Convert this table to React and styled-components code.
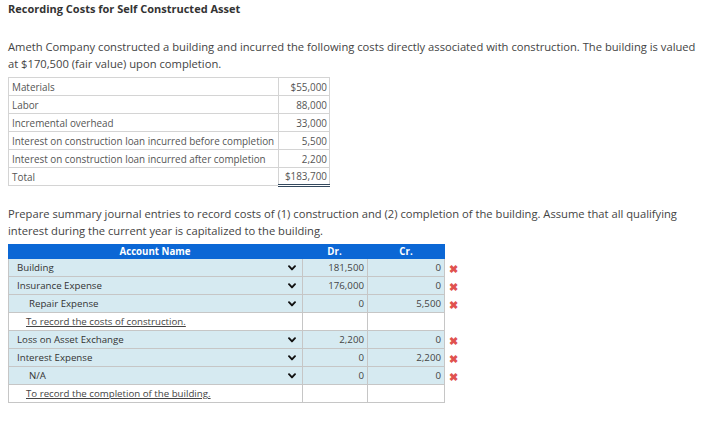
import React from 'react';
import styled, { createGlobalStyle } from 'styled-components';

const GlobalStyle = createGlobalStyle`
  body {
    margin: 0;
    background: #ffffff;
    font-family: "Open Sans", "Liberation Sans", sans-serif;
    color: #333333;
  }
`;

const Page = styled.div`
  padding: 0 8px;
  width: 714px;
  box-sizing: border-box;
`;

const Title = styled.div`
  font-weight: 700;
  font-size: 11px;
  line-height: 18px;
  color: #333333;
`;

const Paragraph = styled.p`
  margin: ${(p) => p.$top}px 0 ${(p) => p.$bottom}px 0;
  font-size: 11.2px;
  line-height: 17px;
  color: #444444;
`;

const CostTable = styled.table`
  border-collapse: collapse;
  font-size: 9.9px;
  color: #555555;
`;

const CostRow = styled.tr`
  height: 18px;
`;

const CostLabel = styled.td`
  border: 1px solid #d4d4d4;
  padding: 0 3px;
  width: 263px;
  white-space: nowrap;
`;

const CostValue = styled.td`
  border: 1px solid #d4d4d4;
  border-top: ${(p) => (p.$total ? '1px solid #222' : '1px solid #d4d4d4')};
  border-bottom: ${(p) => (p.$total ? '3px double #34495e' : '1px solid #d4d4d4')};
  padding: 0 2px;
  width: 46px;
  text-align: right;
`;

const Journal = styled.div`
  display: grid;
  grid-template-columns: 294px 65px 78px 20px;
  font-size: 9.7px;
  color: #333333;
`;

const HeadCell = styled.div`
  background: #0b67d5;
  color: #ffffff;
  font-weight: 700;
  height: 15px;
  line-height: 15px;
  text-align: center;
`;

const Gap = styled.div``;

const NameCell = styled.div`
  display: flex;
  align-items: center;
  justify-content: space-between;
  height: 18px;
  box-sizing: border-box;
  background: ${(p) => (p.$memo ? '#ffffff' : '#d6eaf1')};
  border-left: 1px solid #c6c6c6;
  border-bottom: 1px solid #c6c6c6;
  padding-left: ${(p) => p.$indent}px;
  padding-right: 6px;
`;

const Memo = styled.span`
  text-decoration: underline;
  color: #444444;
`;

const Chevron = styled.svg`
  width: 8px;
  height: 6px;
`;

const NumCell = styled.div`
  height: 18px;
  line-height: 17px;
  box-sizing: border-box;
  background: ${(p) => (p.$memo ? '#ffffff' : '#d6eaf1')};
  border-left: 1px solid #c6c6c6;
  border-right: ${(p) => (p.$last ? '1px solid #c6c6c6' : 'none')};
  border-bottom: 1px solid #c6c6c6;
  text-align: right;
  padding-right: 3px;
  color: #444444;
`;

const Mark = styled.div`
  height: 18px;
  display: flex;
  align-items: center;
  padding-left: 4px;
  color: #e0524f;
  font-weight: 700;
  font-size: 11px;
`;

const costs = [
  ['Materials', '$55,000'],
  ['Labor', '88,000'],
  ['Incremental overhead', '33,000'],
  ['Interest on construction loan incurred before completion', '5,500'],
  ['Interest on construction loan incurred after completion', '2,200'],
];

const rows = [
  { name: 'Building', indent: 8, dr: '181,500', cr: '0' },
  { name: 'Insurance Expense', indent: 8, dr: '176,000', cr: '0' },
  { name: 'Repair Expense', indent: 20, dr: '0', cr: '5,500' },
  { memo: 'To record the costs of construction.' },
  { name: 'Loss on Asset Exchange', indent: 8, dr: '2,200', cr: '0' },
  { name: 'Interest Expense', indent: 8, dr: '0', cr: '2,200' },
  { name: 'N/A', indent: 20, dr: '0', cr: '0' },
  { memo: 'To record the completion of the building.' },
];

function Down() {
  return (
    <Chevron viewBox="0 0 8 6">
      <path d="M1 1.2 L4 4.4 L7 1.2" fill="none" stroke="#111" strokeWidth="1.9" strokeLinecap="round" strokeLinejoin="round" />
    </Chevron>
  );
}

export default function App() {
  return (
    <Page>
      <GlobalStyle />
      <Title>Recording Costs for Self Constructed Asset</Title>
      <Paragraph $top={20} $bottom={5}>
        Ameth Company constructed a building and incurred the following costs directly associated with construction. The building is valued at $170,500 (fair value) upon completion.
      </Paragraph>
      <CostTable>
        <tbody>
          {costs.map(([label, value]) => (
            <CostRow key={label}>
              <CostLabel>{label}</CostLabel>
              <CostValue>{value}</CostValue>
            </CostRow>
          ))}
          <CostRow>
            <CostLabel>Total</CostLabel>
            <CostValue $total>$183,700</CostValue>
          </CostRow>
        </tbody>
      </CostTable>
      <Paragraph $top={18} $bottom={5}>
        Prepare summary journal entries to record costs of (1) construction and (2) completion of the building. Assume that all qualifying interest during the current year is capitalized to the building.
      </Paragraph>
      <Journal>
        <HeadCell>Account Name</HeadCell>
        <HeadCell>Dr.</HeadCell>
        <HeadCell>Cr.</HeadCell>
        <Gap />
        {rows.map((r, i) =>
          r.memo ? (
            <React.Fragment key={i}>
              <NameCell $memo $indent={17}>
                <Memo>{r.memo}</Memo>
              </NameCell>
              <NumCell $memo />
              <NumCell $memo $last />
              <Gap />
            </React.Fragment>
          ) : (
            <React.Fragment key={i}>
              <NameCell $indent={r.indent}>
                <span>{r.name}</span>
                <Down />
              </NameCell>
              <NumCell>{r.dr}</NumCell>
              <NumCell $last>{r.cr}</NumCell>
              <Mark>✖</Mark>
            </React.Fragment>
          )
        )}
      </Journal>
    </Page>
  );
}
